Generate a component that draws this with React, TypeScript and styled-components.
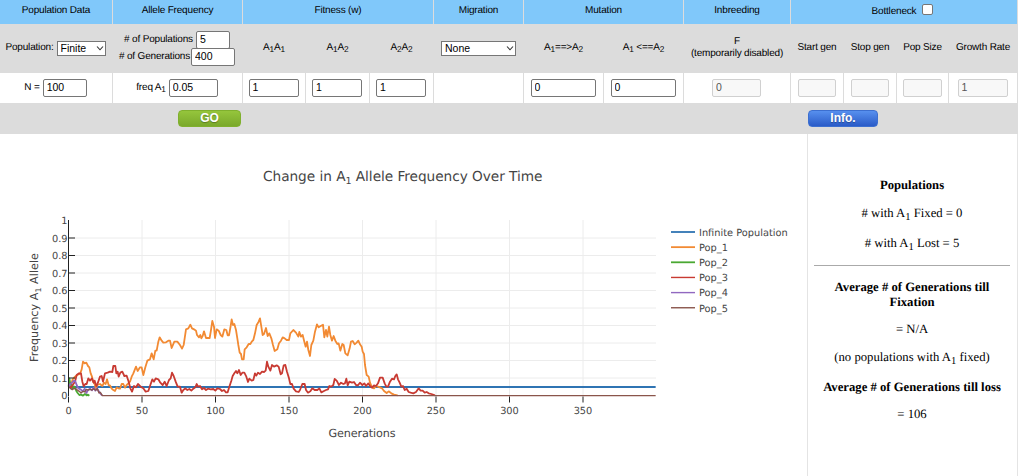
import { ReactNode } from "react";
import styled, { createGlobalStyle, css } from "styled-components";

const GlobalStyle = createGlobalStyle`
  body {
    margin: 0;
    background: #fff;
    color: #000;
    overflow: hidden;
  }
`;

const Page = styled.div`
  width: 1018px;
  height: 476px;
  box-sizing: border-box;
  display: flex;
  flex-direction: column;
  font-family: "Liberation Sans", Arial, sans-serif;
  font-size: 10px;
  letter-spacing: -0.18px;
  text-rendering: geometricPrecision;
`;

const Grid = styled.div`
  display: grid;
  grid-template-columns: 113px 130px 63px 64px 64px 90px 80px 80px 107px 53px 53px 52px 69px;
  grid-template-rows: 24px 49px 30px;
`;

const Cell = styled.div`
  display: flex;
  align-items: center;
  justify-content: center;
  box-sizing: border-box;
  border-right: 1px solid #dcdcdc;
  white-space: nowrap;
`;

const HeadCell = styled(Cell)<{ $span?: number }>`
  grid-column: span ${({ $span }) => $span || 1};
  background: #80c8fa;
  padding-bottom: 3px;
`;

const LabelCell = styled(Cell)`
  background: #dcdcdc;
  flex-direction: column;
  line-height: 12px;
  padding-bottom: 1px;
`;

const FieldCell = styled(Cell)`
  background: #fff;
  gap: 3px;
  padding: 0 1px 1px 0;
`;

const Line = styled.div<{ $gap?: number }>`
  display: flex;
  align-items: center;
  gap: ${({ $gap }) => $gap ?? 3}px;
  height: 17px;
  padding-right: 1px;
`;

const Input = styled.input<{ $w: number }>`
  width: ${({ $w }) => $w}px;
  height: 18px;
  box-sizing: border-box;
  margin: 0;
  padding: 0 0 1px 3px;
  border: 1px solid #767676;
  border-radius: 2px;
  background: #fff;
  color: #000;
  font: 10.5px "Liberation Sans", Arial, sans-serif;

  &:disabled {
    border-color: #d0d0d0;
    background: #f8f8f8;
    color: #555;
  }
`;

const SelectBox = styled.div<{ $w: number }>`
  position: relative;
  display: flex;
  width: ${({ $w }) => $w}px;
  height: 15px;

  select {
    appearance: none;
    width: 100%;
    box-sizing: border-box;
    margin: 0;
    padding: 0 3px;
    border: 1px solid #767676;
    border-radius: 0;
    background: #fff;
    color: #000;
    font: 10.5px "Liberation Sans", Arial, sans-serif;
  }

  svg {
    position: absolute;
    right: 2px;
    top: 4px;
  }
`;

const BottleneckLabel = styled.label`
  display: flex;
  align-items: flex-end;
  gap: 6px;
  height: 13px;
  line-height: 10px;
  padding: 0 3px 1px 0;
`;

const Check = styled.input`
  appearance: none;
  width: 11px;
  height: 11px;
  margin: 0 0 2px;
  box-sizing: border-box;
  border: 1px solid #767676;
  border-radius: 2px;
  background: #fff;
`;

const Small = styled.sub`
  font-size: 0.83em;
  line-height: 0;
  vertical-align: -0.24em;
`;

const Actions = styled.div`
  display: flex;
  flex-shrink: 0;
  box-sizing: border-box;
  height: 31px;
  padding: 7px 0 0 178px;
  gap: 567px;
  background: #dcdcdc;
`;

const green = css`
  background: linear-gradient(#95c53c, #7aa92b);
  border-color: #80b02e;
`;
const blue = css`
  background: linear-gradient(#5790ee, #2a5bc8);
  border-color: #3c6fd0;
`;

const Button = styled.button<{ $w: number; $kind: "go" | "info" }>`
  width: ${({ $w }) => $w}px;
  height: 17px;
  padding: 0;
  border: 1px solid;
  border-radius: 4px;
  color: #fff;
  font: bold 12px/13px "Liberation Sans", Arial, sans-serif;
  text-shadow: 0 1px 1px rgba(0, 0, 0, 0.3);
  ${({ $kind }) => ($kind === "go" ? green : blue)}
`;

const Body = styled.div`
  display: flex;
  flex: 1;
  border-right: 1px solid #e4e4e4;
`;

const ChartBox = styled.div`
  width: 807px;
  letter-spacing: 0;

  svg {
    display: block;
  }

  text {
    font-family: "DejaVu Sans", Verdana, sans-serif;
    fill: #444;
  }
`;

const Summary = styled.div`
  flex: 1;
  border-left: 1px solid #e4e4e4;
  padding: 44px 7px 0 6px;
  font-family: "Liberation Serif", "Times New Roman", serif;
  font-size: 12.7px;
  letter-spacing: 0;
  line-height: 14.4px;
  text-align: center;
`;

const Stat = styled.div<{ $top?: number; $bold?: boolean }>`
  margin-top: ${({ $top }) => $top || 0}px;
  font-weight: ${({ $bold }) => ($bold ? "bold" : "normal")};
`;

const Rule = styled.div`
  height: 1px;
  margin: 15px 0 14px;
  background: #aaa;
`;

const Select = ({ w, value }: { w: number; value: string }) => (
  <SelectBox $w={w}>
    <select defaultValue={value}>
      <option>{value}</option>
    </select>
    <svg width="8" height="7" viewBox="0 0 8 7">
      <path d="M1 1.5 4 4.8 7 1.5" fill="none" stroke="#333" strokeWidth="1.1" />
    </svg>
  </SelectBox>
);

const A = ({ n }: { n: number }) => (
  <>
    A<Small>{n}</Small>
  </>
);

// traces are kept at a third of a pixel, from (60, 310)
const POP_1 =
  "28,230 34,222 38,208 45,200 52,195 60,192 65,178 69,155 74,160 79,158 84,168 88,172 92,190 96,200 99,215 104,222 107,235 112,225 120,222 127,228 132,218 137,222 141,208 146,226 150,226 155,236 160,240 165,243 170,232 175,235 180,236 185,222 190,222 195,233 200,225 205,220 210,215 215,200 220,190 228,170 233,183 240,172 245,172 250,195 256,172 262,152 270,148 275,130 281,148 286,122 290,122 295,95 299,82 305,92 310,98 318,97 325,92 330,92 335,114 343,95 352,95 360,105 366,116 371,105 374,85 378,58 385,55 391,44 396,55 402,58 408,62 411,75 417,82 421,75 424,85 428,78 432,64 438,84 449,84 453,60 457,33 462,50 465,84 470,58 476,62 482,75 487,80 493,58 499,60 503,76 507,76 512,48 515,28 519,45 523,42 528,60 532,85 535,105 539,128 543,132 546,148 551,148 554,118 560,112 566,102 571,102 576,94 580,90 585,70 590,45 596,35 600,25 604,50 608,75 612,72 618,54 623,78 628,70 634,85 639,105 644,123 652,118 657,100 663,92 668,82 674,85 680,90 687,90 691,70 700,60 708,68 715,80 718,66 723,80 728,75 733,95 737,110 741,95 745,120 750,138 754,105 760,92 765,65 771,43 776,52 782,48 789,44 793,82 798,60 802,80 807,50 811,75 816,92 821,78 826,92 832,102 836,100 841,122 847,102 851,105 856,130 863,136 869,115 873,95 878,93 884,103 890,98 895,92 900,103 905,110 908,125 912,132 915,165 920,195 926,200 930,218 936,232 942,235 948,228 954,230 960,232 966,235 972,243 980,249 986,244 994,250 1002,254 1013,256";

const POP_3 =
  "28,230 34,232 38,225 45,215 50,195 57,190 63,190 67,215 71,229 76,222 80,222 85,205 90,212 96,205 101,218 104,212 109,228 113,220 120,200 125,198 129,215 135,190 143,188 150,185 157,186 160,168 166,168 169,190 173,185 176,200 181,188 187,185 193,198 200,197 206,215 211,235 216,245 222,228 228,232 234,222 242,230 250,235 257,245 265,243 271,225 277,208 282,215 287,205 295,208 301,218 308,225 314,215 320,228 327,210 332,205 336,188 341,198 347,215 353,230 360,230 365,248 370,240 376,235 382,240 388,237 394,242 400,236 406,232 410,222 414,230 420,228 426,238 432,234 438,240 444,236 452,238 460,237 466,242 472,235 480,237 486,243 492,240 498,247 503,247 508,230 514,212 518,198 523,190 528,183 532,190 537,180 542,195 547,188 553,188 559,200 564,216 568,206 575,212 580,210 585,190 589,197 594,188 600,192 606,185 612,186 617,182 621,155 625,170 631,182 636,165 642,170 650,166 656,170 662,193 666,190 671,166 676,165 681,185 687,205 691,222 696,222 701,236 708,244 716,246 720,240 727,222 734,222 738,240 744,248 751,244 757,235 764,240 772,240 778,235 784,247 792,243 798,240 804,238 808,228 814,230 820,225 824,207 830,212 837,225 843,218 850,222 855,220 859,206 863,226 868,215 876,218 882,216 888,225 894,226 900,218 907,225 913,220 918,228 925,220 930,228 936,233 942,226 948,228 954,220 960,203 968,203 974,220 979,230 984,230 990,215 996,206 1002,208 1006,198 1010,193 1014,208 1019,218 1024,230 1029,228 1034,240 1040,236 1046,246 1052,248 1060,250 1068,246 1076,235 1082,242 1088,242 1094,248 1100,246 1106,250 1114,252 1125,256";

const TRACES = [
  { name: "Infinite Population", color: "#2f74b3", points: "26,231 1787,231" },
  { name: "Pop_1", color: "#f28a33", points: POP_1 },
  {
    name: "Pop_2",
    color: "#4aa832",
    points: "26,230 28,205 31,222 34,225 37,237 41,229 45,232 49,243 53,249 58,255 63,254 69,257 75,252 80,256 84,254 88,257",
  },
  { name: "Pop_3", color: "#c83a32", points: POP_3 },
  {
    name: "Pop_4",
    color: "#9168c0",
    points: "26,230 31,222 36,218 42,212 46,214 50,225 55,235 62,238 68,244 74,236 79,249 84,240 90,236 96,241 101,233 106,242 111,235 117,245 121,250 126,256",
  },
  {
    name: "Pop_5",
    color: "#8a554b",
    points: "26,230 31,235 37,239 42,235 48,237 53,241 58,244 63,249 69,244 74,246 79,238 84,240 90,238 96,240 101,236 107,241 112,236 117,249 121,247 127,257 1787,257",
  },
];

const xs = [0, 50, 100, 150, 200, 250, 300, 350];
const ys = [0, 1, 2, 3, 4, 5, 6, 7, 8, 9, 10];
const px = (gen: number) => 68.5 + gen * 1.47;
const py = (tenths: number) => 395.5 - tenths * 17.5;

const Chart = () => (
  <svg width="807" height="342" viewBox="0 134 807 342">
    <g stroke="#ececec">
      {xs.slice(1).map((x) => (
        <path key={x} d={`M${px(x)} 220V395`} />
      ))}
      {ys.slice(1, 10).map((y) => (
        <path key={y} d={`M69 ${py(y)}H656`} />
      ))}
    </g>
    <g transform="translate(60 310) scale(.33333)" fill="none" strokeWidth="5.4" strokeLinejoin="round">
      {TRACES.map((t) => (
        <polyline key={t.name} points={t.points} stroke={t.color} strokeWidth={t.name === "Pop_5" ? 4 : undefined} />
      ))}
    </g>
    <g stroke="#222">
      <path d="M68.5 220V396" />
      {ys.slice(1, 10).map((y) => (
        <path key={y} d={`M69 ${py(y)}h6`} />
      ))}
      {xs.map((x) => (
        <path key={x} d={`M${px(x)} 396.5v6`} />
      ))}
    </g>
    <g fontSize="9.8" textAnchor="end">
      {ys.map((y) => (
        <text key={y} x="67.5" y={py(y) + 3.6}>
          {y / 10}
        </text>
      ))}
    </g>
    <g fontSize="9.8" textAnchor="middle">
      {xs.map((x) => (
        <text key={x} x={px(x)} y="414">
          {x}
        </text>
      ))}
    </g>
    <text x="263" y="181" fontSize="13.7" textLength="279.5">
      Change in A<tspan fontSize="9.5" dy="3">1</tspan>
      <tspan dy="-3"> Allele Frequency Over Time</tspan>
    </text>
    <text x="328.5" y="437" fontSize="11.2" textLength="67">
      Generations
    </text>
    <text transform="translate(38 362) rotate(-90)" fontSize="11.2" textLength="109">
      Frequency A<tspan fontSize="7.8" dy="3">1</tspan>
      <tspan dy="-3"> Allele</tspan>
    </text>
    {TRACES.map((t, i) => (
      <g key={t.name}>
        <path d={`M671 ${232 + i * 15.15}h24`} stroke={t.color} strokeWidth={i < 3 ? 1.8 : 1.4} />
        <text x="699" y={235.8 + i * 15.15} fontSize="9.8">
          {t.name}
        </text>
      </g>
    ))}
  </svg>
);

const heads: [ReactNode, number][] = [
  ["Population Data", 1],
  ["Allele Frequency", 1],
  ["Fitness (w)", 3],
  ["Migration", 1],
  ["Mutation", 2],
  ["Inbreeding", 1],
];

const App = () => {
  return (
    <Page>
      <GlobalStyle />
      <Grid>
        {heads.map(([label, span], i) => (
          <HeadCell key={i} $span={span}>
            {label}
          </HeadCell>
        ))}
        <HeadCell $span={4}>
          <BottleneckLabel>
            Bottleneck
            <Check type="checkbox" />
          </BottleneckLabel>
        </HeadCell>

        <LabelCell>
          <Line>
            Population: <Select w={49} value="Finite" />
          </Line>
        </LabelCell>
        <LabelCell>
          <Line>
            # of Populations <Input $w={34} defaultValue="5" />
          </Line>
          <Line $gap={1}>
            # of Generations <Input $w={44} defaultValue="400" />
          </Line>
        </LabelCell>
        <LabelCell>
          <span>
            <A n={1} />
            <A n={1} />
          </span>
        </LabelCell>
        <LabelCell>
          <span>
            <A n={1} />
            <A n={2} />
          </span>
        </LabelCell>
        <LabelCell>
          <span>
            <A n={2} />
            <A n={2} />
          </span>
        </LabelCell>
        <LabelCell>
          <Select w={75} value="None" />
        </LabelCell>
        <LabelCell>
          <span>
            <A n={1} />
            {"==>"}
            <A n={2} />
          </span>
        </LabelCell>
        <LabelCell>
          <span>
            <A n={1} />
            {" <=="}
            <A n={2} />
          </span>
        </LabelCell>
        <LabelCell>
          <span>F</span>
          <span>(temporarily disabled)</span>
        </LabelCell>
        <LabelCell>Start gen</LabelCell>
        <LabelCell>Stop gen</LabelCell>
        <LabelCell>Pop Size</LabelCell>
        <LabelCell>Growth Rate</LabelCell>

        <FieldCell>
          N = <Input $w={44} defaultValue="100" />
        </FieldCell>
        <FieldCell>
          <span>
            freq <A n={1} />
          </span>
          <Input $w={49} defaultValue="0.05" />
        </FieldCell>
        <FieldCell>
          <Input $w={50} defaultValue="1" />
        </FieldCell>
        <FieldCell>
          <Input $w={50} defaultValue="1" />
        </FieldCell>
        <FieldCell>
          <Input $w={50} defaultValue="1" />
        </FieldCell>
        <FieldCell />
        <FieldCell>
          <Input $w={65} defaultValue="0" />
        </FieldCell>
        <FieldCell>
          <Input $w={65} defaultValue="0" />
        </FieldCell>
        <FieldCell>
          <Input $w={49} defaultValue="0" disabled />
        </FieldCell>
        <FieldCell>
          <Input $w={38} disabled />
        </FieldCell>
        <FieldCell>
          <Input $w={38} disabled />
        </FieldCell>
        <FieldCell>
          <Input $w={39} disabled />
        </FieldCell>
        <FieldCell>
          <Input $w={50} defaultValue="1" disabled />
        </FieldCell>
      </Grid>
      <Actions>
        <Button $w={63} $kind="go">
          GO
        </Button>
        <Button $w={70} $kind="info">
          Info.
        </Button>
      </Actions>
      <Body>
        <ChartBox>
          <Chart />
        </ChartBox>
        <Summary>
          <Stat $bold>Populations</Stat>
          <Stat $top={13.6}>
            # with <A n={1} /> Fixed = 0
          </Stat>
          <Stat $top={15.4}>
            # with <A n={1} /> Lost = 5
          </Stat>
          <Rule />
          <Stat $bold>
            Average # of Generations till
            <br />
            Fixation
          </Stat>
          <Stat $top={13}>= N/A</Stat>
          <Stat $top={13.6}>
            (no populations with <A n={1} /> fixed)
          </Stat>
          <Stat $top={15.4} $bold>
            Average # of Generations till loss
          </Stat>
          <Stat $top={13}>= 106</Stat>
        </Summary>
      </Body>
    </Page>
  );
};

export default App;
